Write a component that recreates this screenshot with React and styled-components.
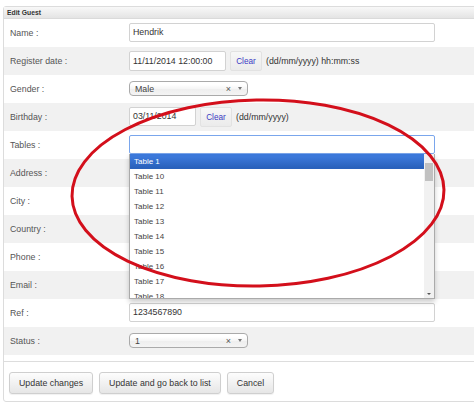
import React from "react";
import styled, { createGlobalStyle } from "styled-components";

const Global = createGlobalStyle`
  html, body { margin: 0; padding: 0; background: #fff; overflow: hidden; }
  body { padding: 6px 0 0 3px; font-family: "Liberation Sans", Arial, sans-serif; }
  * { box-sizing: border-box; }
`;

const Panel = styled.div`
  width: 490px;
  border: 1px solid #dcdcdc;
  border-radius: 3px;
  background: #fff;
`;

const Header = styled.div`
  height: 12px;
  line-height: 11px;
  padding-left: 3px;
  font-size: 6.8px;
  font-weight: bold;
  color: #333;
  background: linear-gradient(#f8f8f8, #e4e4e4);
  border-bottom: 1px solid #dadada;
`;

const Rows = styled.div`
  padding-bottom: 6px;
`;

const Row = styled.div`
  position: relative;
  z-index: ${(p) => (p.$raised ? 3 : 1)};
  display: grid;
  grid-template-columns: 125px 1fr;
  align-items: center;
  height: 28px;
  padding-bottom: 1px;
  background: ${(p) => (p.$alt ? "#f1f1f1" : "#fff")};
`;

const Label = styled.div`
  padding-left: 6px;
  font-size: 8.8px;
  color: #555;
`;

const Field = styled.div`
  display: flex;
  align-items: center;
  gap: 4px;
  position: relative;
`;

const Input = styled.div`
  width: ${(p) => p.$w}px;
  height: ${(p) => p.$h || 19}px;
  line-height: ${(p) => (p.$h || 19) - 2}px;
  padding: 0 3px;
  border: 1px solid ${(p) => (p.$focus ? "#7aa6ec" : "#d2d2d2")};
  border-radius: 2px;
  background: #fff;
  font-size: 8.8px;
  color: #333;
  white-space: nowrap;
  overflow: hidden;
`;

const ClearBtn = styled.div`
  width: 32px;
  height: 20px;
  line-height: 20px;
  text-align: center;
  font-size: 8.2px;
  color: #3b3bc4;
  background: linear-gradient(#f7f7f7, #ebebeb);
  border: 1px solid #e2e2e2;
  border-radius: 2px;
`;

const Hint = styled.span`
  font-size: 8.8px;
  color: #333;
  white-space: nowrap;
`;

const Select = styled.div`
  width: 119px;
  height: 15px;
  display: flex;
  align-items: center;
  padding: 0 5px 0 5px;
  border: 1px solid #aaa;
  border-radius: 4px;
  background: linear-gradient(#fff 20%, #f6f6f6 50%, #eee 52%, #f4f4f4 100%);
  font-size: 8.8px;
  color: #444;
`;

const SelectText = styled.span`
  flex: 1;
`;

const SelectX = styled.span`
  font-size: 9px;
  color: #555;
  margin-right: 7px;
`;

const Caret = styled.span`
  width: 0;
  height: 0;
  border-left: 2.5px solid transparent;
  border-right: 2.5px solid transparent;
  border-top: 3px solid #777;
`;

const Dropdown = styled.div`
  position: absolute;
  left: 0;
  top: 19px;
  width: 306px;
  height: 145px;
  display: flex;
  background: #fff;
  border: 1px solid #aaa;
  border-top: 0;
  box-shadow: 0 3px 5px rgba(0, 0, 0, 0.2);
`;

const List = styled.div`
  flex: 1;
  overflow: hidden;
`;

const Item = styled.div`
  height: 15px;
  line-height: 15px;
  padding-left: 4px;
  font-size: 8px;
  color: ${(p) => (p.$active ? "#fff" : "#444")};
  background: ${(p) =>
    p.$active ? "linear-gradient(#3b78da 20%, #2a62bc 90%)" : "transparent"};
`;

const Scrollbar = styled.div`
  width: 10px;
  display: flex;
  flex-direction: column;
  background: #f1f1f1;
`;

const ScrollSpace = styled.div`
  height: ${(p) => p.$h}px;
  flex: ${(p) => (p.$grow ? 1 : "none")};
`;

const Thumb = styled.div`
  height: 18px;
  margin: 0 1px;
  background: #c1c1c1;
`;

const ScrollArrow = styled.div`
  height: 9px;
  display: flex;
  align-items: center;
  justify-content: center;
  &::after {
    content: "";
    border-left: 2px solid transparent;
    border-right: 2px solid transparent;
    border-top: 2.5px solid #555;
  }
`;

const Footer = styled.div`
  display: flex;
  gap: 6px;
  padding: 10px 5px 7px;
  border-top: 1px solid #ddd;
`;

const Button = styled.div`
  height: 22px;
  line-height: 20px;
  padding: 0 9px;
  font-size: 8.8px;
  color: #333;
  border: 1px solid #cfcfcf;
  border-radius: 3px;
  background: linear-gradient(#fdfdfd, #e6e6e6);
  box-shadow: 0 1px 1px rgba(0, 0, 0, 0.06);
  white-space: nowrap;
`;

const Overlay = styled.svg`
  position: fixed;
  left: 0;
  top: 0;
  width: 474px;
  height: 408px;
  pointer-events: none;
  z-index: 10;
`;

const tables = ["Table 1", "Table 10", "Table 11", "Table 12", "Table 13", "Table 14", "Table 15", "Table 16", "Table 17", "Table 18"];

export default function App() {
  return (
    <>
      <Global />
      <Panel>
        <Header>Edit Guest</Header>
        <Rows>
          <Row>
            <Label>Name :</Label>
            <Field><Input $w={306}>Hendrik</Input></Field>
          </Row>
          <Row $alt>
            <Label>Register date :</Label>
            <Field>
              <Input $w={97} $h={20}>11/11/2014 12:00:00</Input>
              <ClearBtn>Clear</ClearBtn>
              <Hint>(dd/mm/yyyy) hh:mm:ss</Hint>
            </Field>
          </Row>
          <Row>
            <Label>Gender :</Label>
            <Field>
              <Select><SelectText>Male</SelectText><SelectX>×</SelectX><Caret /></Select>
            </Field>
          </Row>
          <Row $alt>
            <Label>Birthday :</Label>
            <Field>
              <Input $w={67}>03/11/2014</Input>
              <ClearBtn>Clear</ClearBtn>
              <Hint>(dd/mm/yyyy)</Hint>
            </Field>
          </Row>
          <Row $raised>
            <Label>Tables :</Label>
            <Field>
              <Input $w={306} $focus />
              <Dropdown>
                <List>
                  {tables.map((t, i) => (
                    <Item key={t} $active={i === 0}>{t}</Item>
                  ))}
                </List>
                <Scrollbar>
                  <ScrollSpace $h={9} />
                  <Thumb />
                  <ScrollSpace $grow />
                  <ScrollArrow />
                </Scrollbar>
              </Dropdown>
            </Field>
          </Row>
          <Row $alt><Label>Address :</Label><Field /></Row>
          <Row><Label>City :</Label><Field /></Row>
          <Row $alt><Label>Country :</Label><Field /></Row>
          <Row><Label>Phone :</Label><Field /></Row>
          <Row $alt><Label>Email :</Label><Field /></Row>
          <Row>
            <Label>Ref :</Label>
            <Field><Input $w={306}>1234567890</Input></Field>
          </Row>
          <Row $alt>
            <Label>Status :</Label>
            <Field>
              <Select><SelectText>1</SelectText><SelectX>×</SelectX><Caret /></Select>
            </Field>
          </Row>
        </Rows>
        <Footer>
          <Button>Update changes</Button>
          <Button>Update and go back to list</Button>
          <Button>Cancel</Button>
        </Footer>
      </Panel>
      <Overlay viewBox="0 0 474 408">
        <ellipse cx="258" cy="193" rx="186" ry="93" fill="none" stroke="#d30f1b" strokeWidth="3" transform="rotate(-1 258 193)" />
      </Overlay>
    </>
  );
}
